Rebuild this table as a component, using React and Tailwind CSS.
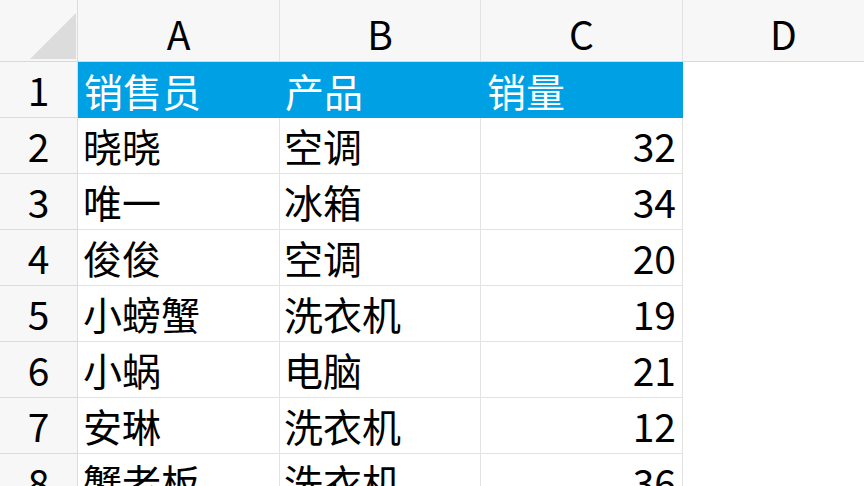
import React from "react";

const rows = [
  ["晓晓", "空调", "32"],
  ["唯一", "冰箱", "34"],
  ["俊俊", "空调", "20"],
  ["小螃蟹", "洗衣机", "19"],
  ["小蜗", "电脑", "21"],
  ["安琳", "洗衣机", "12"],
  ["蟹老板", "洗衣机", "36"],
];

const font = { fontFamily: '"Noto Sans CJK SC", "Noto Sans", sans-serif' };

export default function App() {
  return (
    <div className="w-[864px] h-[486px] overflow-hidden bg-white text-black" style={font}>
      <div className="flex h-[62px] bg-[#f7f7f7] border-b border-[#d9d9d9]">
        <div className="w-[78px] shrink-0 border-r border-[#dcdcdc] relative">
          <svg className="absolute left-[30px] top-[13px]" width="46" height="46" viewBox="0 0 46 46">
            <polygon points="46,0 46,46 0,46" fill="#dcdcdc" />
          </svg>
        </div>
        {["A", "B", "C"].map((l, i) => (
          <div
            key={l}
            className={`${i === 1 ? "w-[201px]" : "w-[202px]"} shrink-0 border-r border-[#e3e3e3] flex items-center justify-center pt-[6px] text-[39px] leading-none`}
          >
            {l}
          </div>
        ))}
        <div className="flex-1 flex items-center justify-center pt-[6px] pl-[20px] text-[39px] leading-none">D</div>
      </div>
      <div className="flex h-[56px]">
        <div className="w-[78px] shrink-0 bg-[#f7f7f7] border-r border-b border-[#dcdcdc] flex items-center justify-center text-[39px] leading-none">1</div>
        <div className="w-[605px] shrink-0 bg-[#00a1e4] flex items-center text-white text-[39px] leading-none">
          <div className="w-[202px] pl-[6px]">销售员</div>
          <div className="w-[201px] pl-[5px]">产品</div>
          <div className="w-[202px] pl-[6px]">销量</div>
        </div>
        <div className="flex-1" />
      </div>
      {rows.map((r, idx) => (
        <div key={idx} className="flex h-[56px]">
          <div className="w-[78px] shrink-0 bg-[#f7f7f7] border-r border-b border-[#dcdcdc] flex items-center justify-center text-[39px] leading-none">
            {idx + 2}
          </div>
          <div className="w-[202px] shrink-0 border-r border-b border-[#e3e3e3] flex items-center pl-[5px] text-[39px] leading-none">{r[0]}</div>
          <div className="w-[201px] shrink-0 border-r border-b border-[#e3e3e3] flex items-center pl-[4px] text-[39px] leading-none">{r[1]}</div>
          <div className="w-[202px] shrink-0 border-r border-b border-[#e3e3e3] flex items-center justify-end pr-[6px] text-[39px] leading-none">{r[2]}</div>
          <div className="flex-1" />
        </div>
      ))}
    </div>
  );
}
